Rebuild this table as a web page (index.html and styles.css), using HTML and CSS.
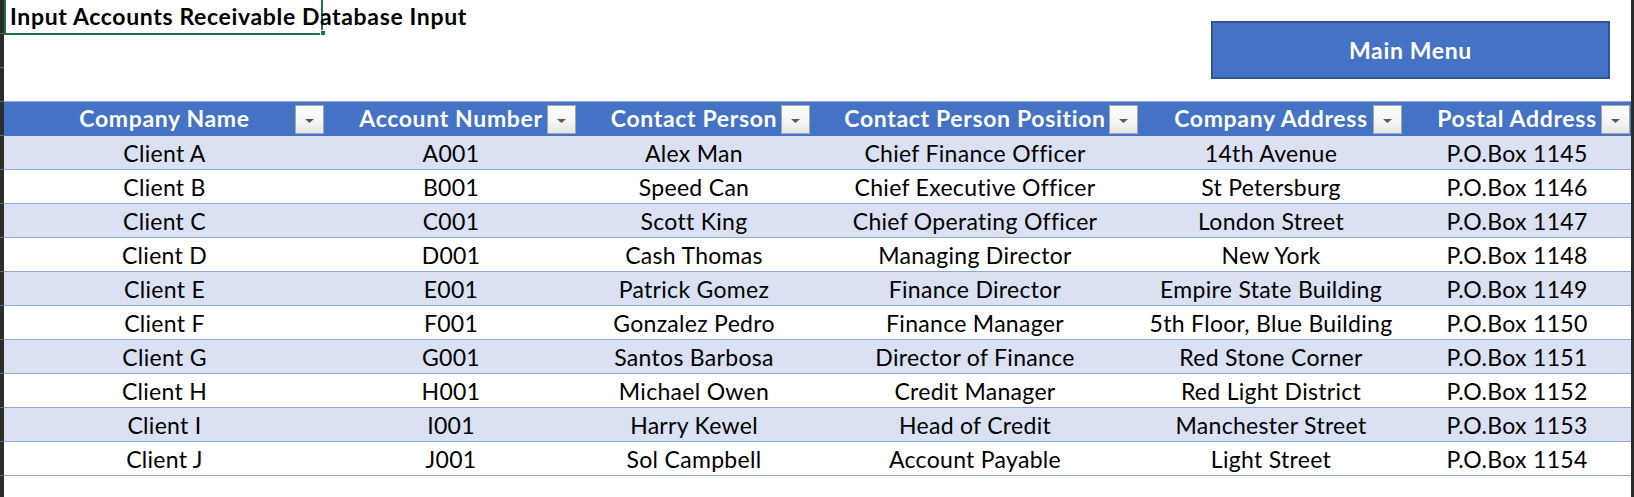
FILE: index.html
```html
<!DOCTYPE html>
<html lang="en">
<head>
<meta charset="utf-8">
<title>Input Accounts Receivable Database Input</title>
<link rel="stylesheet" href="styles.css">
</head>
<body>
<div class="sheet">
  <div class="edge-left"></div>
  <main class="content">
    <div class="top">
      <div class="title-cell">
        <span class="title">Input Accounts Receivable Database Input</span>
        <span class="handle"></span>
      </div>
      <button class="main-menu" type="button">Main Menu</button>
    </div>
    <table class="db">
      <colgroup>
        <col class="c1"><col class="c2"><col class="c3"><col class="c4"><col class="c5"><col class="c6">
      </colgroup>
      <thead>
        <tr>
          <th>Company Name<span class="filter"><svg viewBox="0 0 9 4" width="9" height="4"><polygon points="0,0 9,0 4.5,4"/></svg></span></th>
          <th>Account Number<span class="filter"><svg viewBox="0 0 9 4" width="9" height="4"><polygon points="0,0 9,0 4.5,4"/></svg></span></th>
          <th>Contact Person<span class="filter"><svg viewBox="0 0 9 4" width="9" height="4"><polygon points="0,0 9,0 4.5,4"/></svg></span></th>
          <th>Contact Person Position<span class="filter"><svg viewBox="0 0 9 4" width="9" height="4"><polygon points="0,0 9,0 4.5,4"/></svg></span></th>
          <th>Company Address<span class="filter"><svg viewBox="0 0 9 4" width="9" height="4"><polygon points="0,0 9,0 4.5,4"/></svg></span></th>
          <th>Postal Address<span class="filter"><svg viewBox="0 0 9 4" width="9" height="4"><polygon points="0,0 9,0 4.5,4"/></svg></span></th>
        </tr>
      </thead>
      <tbody>
        <tr><td>Client A</td><td>A001</td><td>Alex Man</td><td>Chief Finance Officer</td><td>14th Avenue</td><td>P.O.Box 1145</td></tr>
        <tr><td>Client B</td><td>B001</td><td>Speed Can</td><td>Chief Executive Officer</td><td>St Petersburg</td><td>P.O.Box 1146</td></tr>
        <tr><td>Client C</td><td>C001</td><td>Scott King</td><td>Chief Operating Officer</td><td>London Street</td><td>P.O.Box 1147</td></tr>
        <tr><td>Client D</td><td>D001</td><td>Cash Thomas</td><td>Managing Director</td><td>New York</td><td>P.O.Box 1148</td></tr>
        <tr><td>Client E</td><td>E001</td><td>Patrick Gomez</td><td>Finance Director</td><td>Empire State Building</td><td>P.O.Box 1149</td></tr>
        <tr><td>Client F</td><td>F001</td><td>Gonzalez Pedro</td><td>Finance Manager</td><td>5th Floor, Blue Building</td><td>P.O.Box 1150</td></tr>
        <tr><td>Client G</td><td>G001</td><td>Santos Barbosa</td><td>Director of Finance</td><td>Red Stone Corner</td><td>P.O.Box 1151</td></tr>
        <tr><td>Client H</td><td>H001</td><td>Michael Owen</td><td>Credit Manager</td><td>Red Light District</td><td>P.O.Box 1152</td></tr>
        <tr><td>Client I</td><td>I001</td><td>Harry Kewel</td><td>Head of Credit</td><td>Manchester Street</td><td>P.O.Box 1153</td></tr>
        <tr><td>Client J</td><td>J001</td><td>Sol Campbell</td><td>Account Payable</td><td>Light Street</td><td>P.O.Box 1154</td></tr>
      </tbody>
    </table>
  </main>
  <div class="edge-right"></div>
</div>
</body>
</html>
```
FILE: styles.css
```css
* { box-sizing: border-box; }
html, body { margin: 0; padding: 0; background: #ffffff; }
body {
  font-family: Lato, "Noto Sans", "Liberation Sans", sans-serif;
  color: #000;
  width: 1634px;
  height: 497px;
  overflow: hidden;
}
.sheet {
  display: flex;
  height: 497px;
}
.edge-left {
  width: 4px;
  flex: none;
  background-color: #2b2b2b;
  background-image: repeating-linear-gradient(to bottom, transparent 0, transparent 33px, #6a6a6a 33px, #6a6a6a 34px);
}
.edge-right {
  width: 3px;
  flex: none;
  background: #2b2b2b;
}
.content {
  flex: 1;
  display: flex;
  flex-direction: column;
}
.top {
  height: 101px;
  display: flex;
  justify-content: space-between;
  align-items: flex-start;
}
.title-cell {
  position: relative;
  width: 319px;
  height: 35px;
  border: 2px solid #217346;
  border-top: none;
  padding-left: 4px;
  white-space: nowrap;
}
.title {
  font-weight: 700;
  font-size: 23px;
  letter-spacing: 0.65px;
  line-height: 32px;
}
.handle {
  position: absolute;
  right: -5px;
  bottom: -3px;
  width: 6px;
  height: 6px;
  background: #217346;
  border: 1px solid #fff;
}
.main-menu {
  margin-top: 21px;
  margin-right: 21px;
  width: 399px;
  height: 58px;
  background: #4472c4;
  border: 2px solid #2f5597;
  color: #fff;
  font-family: inherit;
  font-weight: 700;
  font-size: 23px;
  letter-spacing: 0.65px;
  padding: 0;
}
.db {
  border-collapse: collapse;
  table-layout: fixed;
  width: 1627px;
}
.c1 { width: 321px; }
.c2 { width: 252px; }
.c3 { width: 234px; }
.c4 { width: 328px; }
.c5 { width: 264px; }
.c6 { width: 228px; }
.db th {
  position: relative;
  height: 34px;
  padding: 0;
  background: #4472c4;
  border-top: 1px solid #8ea9db;
  color: #fff;
  font-weight: 700;
  font-size: 23px;
  letter-spacing: 0.65px;
  line-height: 33px;
  text-align: center;
  white-space: nowrap;
}
.filter {
  position: absolute;
  right: 1px;
  top: 3px;
  width: 29px;
  height: 29px;
  border: 1px solid #a6a6a6;
  background: linear-gradient(to bottom, #ffffff 0%, #f4f4f4 60%, #e6e6e6 100%);
  display: flex;
  align-items: center;
  justify-content: center;
  padding-top: 3px;
}
.filter svg { display: block; fill: #5a5a5a; }
.db td {
  height: 34px;
  padding: 1px 0 0;
  border-bottom: 1px solid #8ea9db;
  font-size: 23px;
  letter-spacing: 0.3px;
  line-height: 32px;
  text-align: center;
  white-space: nowrap;
}
.db tbody tr:nth-child(odd) td { background: #d9e1f2; }
```
